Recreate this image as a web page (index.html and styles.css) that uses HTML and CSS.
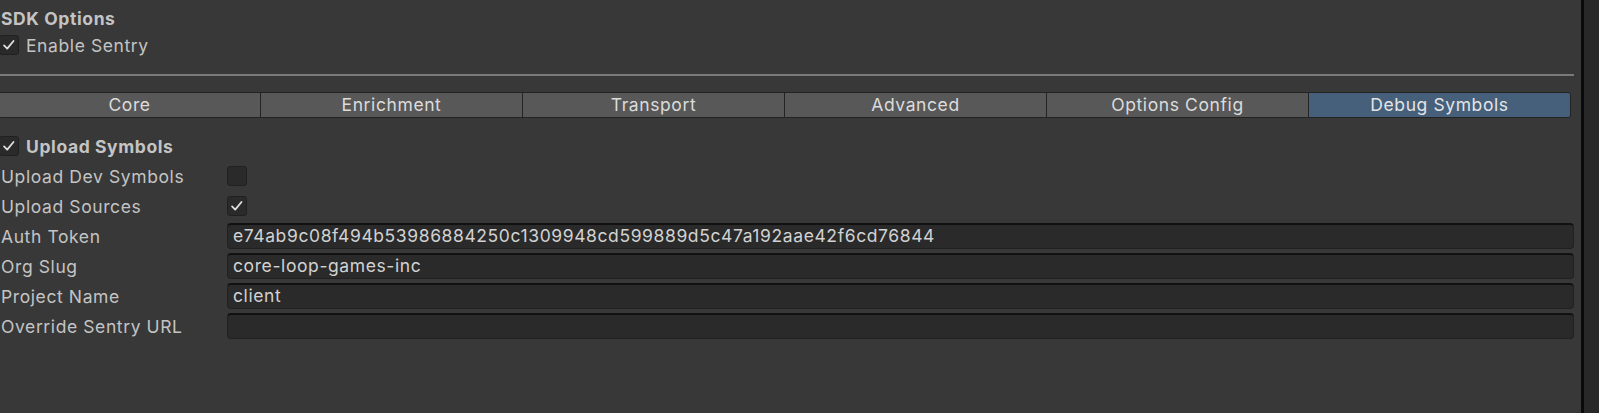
FILE: index.html
```html
<!DOCTYPE html>
<html>
<head>
<meta charset="utf-8">
<link rel="stylesheet" href="styles.css">
</head>
<body>
<div class="window">
  <div class="content">
    <div class="title">SDK Options</div>
    <div class="toggle">
      <span class="cb lead"><svg viewBox="0 0 20 20"><path d="M4.5 10.5 L8 14 L15 5.5"/></svg></span>
      <span>Enable Sentry</span>
    </div>
    <div class="sep"></div>
    <div class="tabs">
      <div class="tab">Core</div>
      <div class="tab">Enrichment</div>
      <div class="tab">Transport</div>
      <div class="tab">Advanced</div>
      <div class="tab">Options Config</div>
      <div class="tab active">Debug Symbols</div>
    </div>
    <div class="rows">
      <div class="toggle bold">
        <span class="cb lead"><svg viewBox="0 0 20 20"><path d="M4.5 10.5 L8 14 L15 5.5"/></svg></span>
        <span>Upload Symbols</span>
      </div>
      <div class="row">
        <div class="label">Upload Dev Symbols</div>
        <span class="cb"></span>
      </div>
      <div class="row">
        <div class="label">Upload Sources</div>
        <span class="cb"><svg viewBox="0 0 20 20"><path d="M4.5 10.5 L8 14 L15 5.5"/></svg></span>
      </div>
      <div class="row">
        <div class="label">Auth Token</div>
        <div class="field">e74ab9c08f494b53986884250c1309948cd599889d5c47a192aae42f6cd76844</div>
      </div>
      <div class="row">
        <div class="label">Org Slug</div>
        <div class="field">core-loop-games-inc</div>
      </div>
      <div class="row">
        <div class="label">Project Name</div>
        <div class="field">client</div>
      </div>
      <div class="row">
        <div class="label">Override Sentry URL</div>
        <div class="field"></div>
      </div>
    </div>
  </div>
  <div class="scroll"></div>
</div>
</body>
</html>
```

FILE: styles.css
```css
html, body {
  margin: 0;
  padding: 0;
  background: #383838;
  height: 100%;
  overflow: hidden;
}
body {
  font-family: Inter, "Noto Sans", sans-serif;
  font-size: 17.5px;
  letter-spacing: 0.6px;
  color: #c4c4c4;
}
.window {
  display: flex;
  height: 413px;
}
.content {
  width: 1581px;
  flex: 0 0 1581px;
  box-sizing: border-box;
  padding-right: 7px;
}
.scroll {
  flex: 1;
  border-left: 3px solid #0a0a0a;
  background: #282828;
}
.title {
  font-weight: 700;
  line-height: 20px;
  height: 20px;
  margin-top: 9px;
  padding-left: 1px;
}
.toggle {
  display: flex;
  align-items: center;
  height: 20px;
  margin-top: 6px;
  gap: 7px;
}
.toggle.bold {
  font-weight: 700;
  height: 26px;
  margin-top: 0;
}
.cb {
  width: 18px;
  height: 18px;
  background: #2a2a2a;
  border: 1px solid #202020;
  border-radius: 3px;
  display: inline-flex;
  flex: 0 0 auto;
}
.cb.lead {
  margin-left: -1px;
}
.cb svg {
  width: 18px;
  height: 18px;
}
.cb path {
  fill: none;
  stroke: #dedede;
  stroke-width: 2;
  stroke-linecap: round;
  stroke-linejoin: round;
}
.sep {
  height: 2px;
  background: #7a7a7a;
  margin-top: 19px;
}
.tabs {
  display: flex;
  margin-top: 16px;
  margin-left: -2px;
  width: 1571px;
  height: 24px;
  border: 1px solid #232323;
  border-radius: 3px;
  overflow: hidden;
  box-sizing: content-box;
}
.tab {
  flex: 1;
  background: #585858;
  color: #dcdcdc;
  text-align: center;
  line-height: 24px;
  border-left: 1px solid #232323;
}
.tab:first-child {
  border-left: none;
}
.tab.active {
  background: #46607c;
  color: #e4e4e4;
}
.rows {
  margin-top: 15px;
  display: flex;
  flex-direction: column;
  gap: 4px;
}
.row {
  display: flex;
  align-items: center;
  height: 26px;
}
.label {
  width: 227px;
  flex: 0 0 227px;
  padding-left: 1px;
  box-sizing: border-box;
}
.field {
  flex: 1;
  height: 26px;
  box-sizing: border-box;
  background: #2a2a2a;
  border: 1px solid #212121;
  border-top: 2px solid #111111;
  border-radius: 4px;
  line-height: 22px;
  padding-left: 5px;
  color: #d2d2d2;
}
```
